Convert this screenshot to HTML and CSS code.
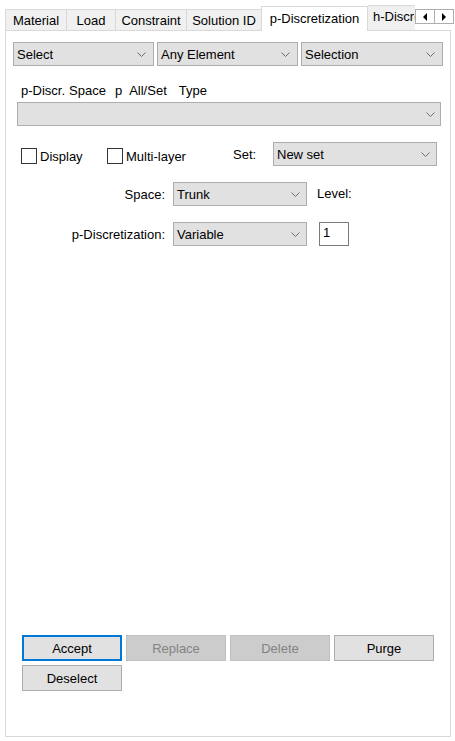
FILE: index.html
```html
<!DOCTYPE html>
<html lang="en">
<head>
  <meta charset="UTF-8" />
  <title>p-Discretization</title>
  <link rel="stylesheet" href="styles.css">
</head>
<body>
  <div class="tabs">
    <div class="tab tab-material">Material</div>
    <div class="tab tab-load">Load</div>
    <div class="tab tab-constraint">Constraint</div>
    <div class="tab tab-solution">Solution ID</div>
    <div class="tab tab-active">p-Discretization</div>
    <div class="tab tab-h">h-Discretization</div>
    <div class="tab-arrows">
      <div class="arrow-btn"><svg width="5" height="8" viewBox="0 0 5 8"><polygon points="4,0 0,4 4,8" fill="#000"/></svg></div>
      <div class="arrow-btn"><svg width="5" height="8" viewBox="0 0 5 8"><polygon points="0,0 4,4 0,8" fill="#000"/></svg></div>
    </div>
  </div>

  <div class="panel">
    <div class="select-row">
      <div class="combo"><span>Select</span><svg class="chev" width="9" height="5" viewBox="0 0 9 5"><polyline points="0.5,0.5 4.5,4.5 8.5,0.5" fill="none" stroke="#6d6d6d"/></svg></div>
      <div class="combo"><span>Any Element</span><svg class="chev" width="9" height="5" viewBox="0 0 9 5"><polyline points="0.5,0.5 4.5,4.5 8.5,0.5" fill="none" stroke="#6d6d6d"/></svg></div>
      <div class="combo"><span>Selection</span><svg class="chev" width="9" height="5" viewBox="0 0 9 5"><polyline points="0.5,0.5 4.5,4.5 8.5,0.5" fill="none" stroke="#6d6d6d"/></svg></div>
    </div>

    <div class="list-head">
      <span class="h-discr">p-Discr.</span>
      <span class="h-space">Space</span>
      <span class="h-p">p</span>
      <span class="h-all">All/Set</span>
      <span>Type</span>
    </div>

    <div class="combo combo-wide"><span></span><svg class="chev" width="9" height="5" viewBox="0 0 9 5"><polyline points="0.5,0.5 4.5,4.5 8.5,0.5" fill="none" stroke="#6d6d6d"/></svg></div>

    <div class="check-row">
      <label class="check check-display"><span class="box"></span>Display</label>
      <label class="check check-multi"><span class="box"></span>Multi-layer</label>
      <span class="set-label">Set:</span>
      <div class="combo combo-set"><span>New set</span><svg class="chev" width="9" height="5" viewBox="0 0 9 5"><polyline points="0.5,0.5 4.5,4.5 8.5,0.5" fill="none" stroke="#6d6d6d"/></svg></div>
    </div>

    <div class="field-row">
      <span class="field-label">Space:</span>
      <div class="combo combo-field"><span>Trunk</span><svg class="chev" width="9" height="5" viewBox="0 0 9 5"><polyline points="0.5,0.5 4.5,4.5 8.5,0.5" fill="none" stroke="#6d6d6d"/></svg></div>
      <span class="level-label">Level:</span>
    </div>

    <div class="field-row">
      <span class="field-label">p-Discretization:</span>
      <div class="combo combo-field"><span>Variable</span><svg class="chev" width="9" height="5" viewBox="0 0 9 5"><polyline points="0.5,0.5 4.5,4.5 8.5,0.5" fill="none" stroke="#6d6d6d"/></svg></div>
      <div class="level-input">1</div>
    </div>

    <div class="spacer"></div>

    <div class="buttons">
      <button class="btn btn-default">Accept</button>
      <button class="btn" disabled>Replace</button>
      <button class="btn" disabled>Delete</button>
      <button class="btn">Purge</button>
      <button class="btn">Deselect</button>
    </div>
  </div>
</body>
</html>
```

FILE: styles.css
```css
body {
  margin: 0;
  background: #fff;
  font-family: "Liberation Sans", Arial, sans-serif;
  font-size: 13px;
  color: #000;
  width: 455px;
  height: 741px;
  overflow: hidden;
}

/* Tab strip */
.tabs {
  display: flex;
  align-items: flex-end;
  height: 30px;
  margin-left: 5px;
  position: relative;
  z-index: 1;
}

.tab {
  box-sizing: border-box;
  height: 21px;
  padding-top: 3px;
  background: #f0f0f0;
  border: 1px solid #d9d9d9;
  border-bottom: none;
  border-right: none;
  text-align: center;
  white-space: nowrap;
  overflow: hidden;
}

.tab-material { width: 61px; }
.tab-load { width: 49px; }
.tab-constraint { width: 71px; }
.tab-solution { width: 75px; }

.tab-active {
  width: 107px;
  height: 25px;
  margin-bottom: -1px;
  padding-top: 4px;
  background: #fff;
  border-right: 1px solid #d9d9d9;
}

.tab-h {
  width: 42px;
  text-align: left;
  padding-left: 5px;
  border-left: none;
  box-sizing: content-box;
}

.tab-arrows {
  display: flex;
  align-self: flex-start;
  margin-top: 9px;
}

.arrow-btn {
  box-sizing: border-box;
  width: 20px;
  height: 15px;
  background: #fff;
  border: 1px solid #adadad;
  display: flex;
  align-items: center;
  justify-content: center;
}

.arrow-btn + .arrow-btn {
  width: 19px;
  border-left: none;
}

/* Panel */
.panel {
  box-sizing: border-box;
  margin-left: 5px;
  width: 446px;
  height: 707px;
  border: 1px solid #d9d9d9;
  display: flex;
  flex-direction: column;
  padding-bottom: 45px;
}

.combo {
  box-sizing: border-box;
  height: 24px;
  background: #e1e1e1;
  border: 1px solid #adadad;
  display: flex;
  align-items: center;
  justify-content: space-between;
  padding: 0 7px 0 3px;
  white-space: nowrap;
}

.chev {
  flex: none;
}

.select-row {
  display: grid;
  grid-template-columns: 141px 141px 142px;
  column-gap: 3px;
  margin: 11px 0 0 7px;
}

.list-head {
  display: flex;
  margin: 17px 0 0 15px;
  line-height: 15px;
}

.h-discr { margin-right: 4px; }
.h-space { margin-right: 9px; }
.h-p { margin-right: 7px; }
.h-all { margin-right: 12px; }

.combo-wide {
  margin: 4px 0 0 11px;
  width: 424px;
  height: 24px;
  padding-right: 5px;
}

.check-row {
  display: flex;
  align-items: center;
  margin: 16px 0 0 15px;
}

.check {
  display: flex;
  align-items: center;
  gap: 3px;
  padding-top: 4px;
}

.check-display { width: 86px; }
.check-multi { width: 126px; }

.box {
  box-sizing: border-box;
  width: 16px;
  height: 16px;
  border: 1px solid #333;
  background: #fff;
}

.set-label {
  width: 40px;
}

.combo-set {
  width: 164px;
  padding-right: 6px;
}

.field-row {
  display: flex;
  align-items: center;
  margin-top: 16px;
}

.field-label {
  width: 159px;
  text-align: right;
  margin-right: 8px;
}

.combo-field {
  width: 134px;
  padding-right: 6px;
}

.level-label {
  margin-left: 10px;
  padding-bottom: 2px;
}

.level-input {
  box-sizing: border-box;
  width: 30px;
  height: 24px;
  margin-left: 12px;
  border: 1px solid #7a7a7a;
  background: #fff;
  padding: 2px 0 0 3px;
}

.spacer {
  flex: 1;
}

/* Bottom buttons */
.buttons {
  display: grid;
  grid-template-columns: repeat(4, 100px);
  gap: 4px;
  margin-left: 16px;
}

.btn {
  box-sizing: border-box;
  height: 26px;
  background: #e1e1e1;
  border: 1px solid #adadad;
  font-family: inherit;
  font-size: 13px;
  color: #000;
  padding: 0;
}

.btn-default {
  border: 2px solid #0078d7;
}

.btn:disabled {
  background: #cccccc;
  border-color: #bfbfbf;
  color: #838383;
}
```
